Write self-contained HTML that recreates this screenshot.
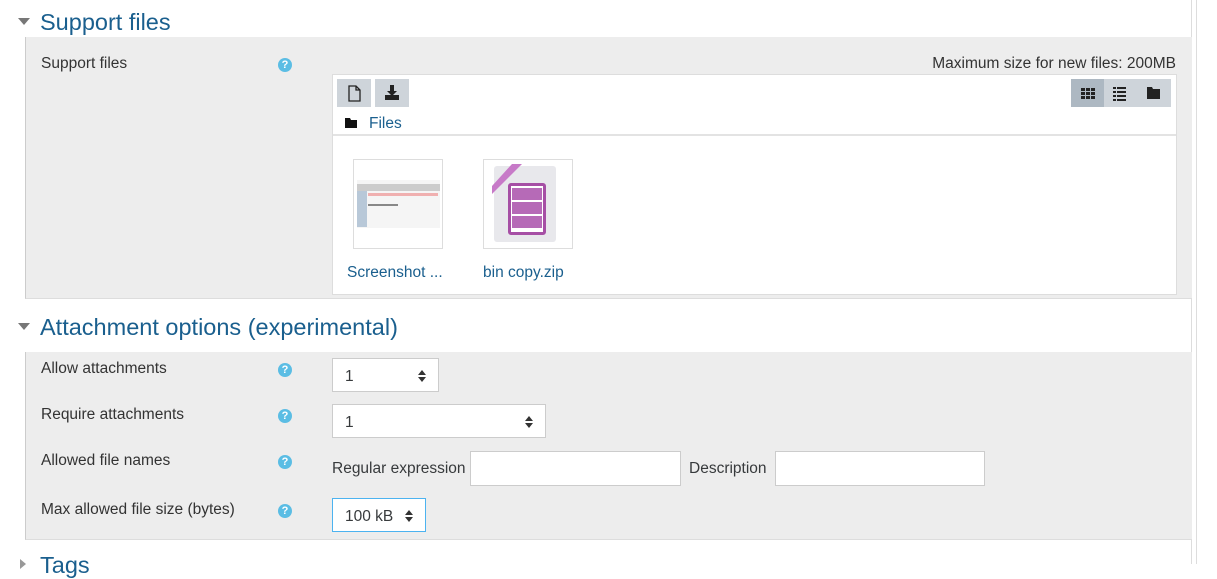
<!DOCTYPE html>
<html><head><style>
body{margin:0;width:1217px;height:564px;overflow:hidden;background:#fff;font-family:"Liberation Sans",sans-serif;font-size:15.5px;color:#373a3c;position:relative}
.a{position:absolute}
h2{position:absolute;margin:0;font-weight:normal;font-size:23.5px;color:#1a5f8e}
.tri{position:absolute;width:0;height:0;border-left:6px solid transparent;border-right:6px solid transparent;border-top:7px solid #777}
.panel{position:absolute;left:25px;width:1166px;background:#ededed;border-left:1px solid #ccc;border-bottom:1px solid #ddd}
.lbl{position:absolute;left:41px;font-size:15.5px;color:#333}
.help{position:absolute;left:278px;width:14px;height:14px;border-radius:50%;background:#5bbde4;color:#fff;font-size:11px;font-weight:bold;text-align:center;line-height:14px}
.sel{position:absolute;left:332px;height:34px;border:1px solid #ccc;background:#fff;box-sizing:border-box;font-size:15.5px;line-height:35px;padding-left:12px}
.sel:after{content:"";position:absolute;right:12px;top:11px;border-left:4px solid transparent;border-right:4px solid transparent;border-bottom:5px solid #333}
.sel:before{content:"";position:absolute;right:12px;top:18px;border-left:4px solid transparent;border-right:4px solid transparent;border-top:5px solid #333}
.inp{position:absolute;height:35px;border:1px solid #ccc;background:#fff;box-sizing:border-box}
.btn{position:absolute;top:79px;height:28px;background:#ced4da}
</style></head><body>
<div class="a" style="left:1191px;top:0;width:1px;height:564px;background:#ddd"></div>
<div class="a" style="left:1196px;top:0;width:1px;height:564px;background:#ddd"></div>

<div class="tri" style="left:18px;top:18px"></div>
<h2 style="left:40px;top:9px">Support files</h2>
<div class="panel" style="top:37px;height:261px"></div>
<div class="lbl" style="top:55px">Support files</div>
<div class="help" style="top:58px">?</div>
<div class="a" style="right:41px;top:55px;font-size:15.5px;color:#333">Maximum size for new files: 200MB</div>
<div class="a" style="left:332px;top:74px;width:843px;height:219px;background:#fff;border:1px solid #ddd"></div>
<div class="btn" style="left:337px;width:34px"><svg width="34" height="28"><path d="M12 7h7l4 4v11H12z M19 7v4h4" fill="none" stroke="#222" stroke-width="1.3"/></svg></div>
<div class="btn" style="left:375px;width:34px"><svg width="34" height="28"><path d="M15 6h4v6h3l-5 5-5-5h3z" fill="#222"/><rect x="10" y="16" width="14" height="5" fill="#222"/></svg></div>
<div class="btn" style="left:1071px;width:33px;background:#adb8c2"><svg width="33" height="28"><g fill="#222"><rect x="10" y="9" width="4" height="3"/><rect x="15" y="9" width="4" height="3"/><rect x="20" y="9" width="4" height="3"/><rect x="10" y="13" width="4" height="3"/><rect x="15" y="13" width="4" height="3"/><rect x="20" y="13" width="4" height="3"/><rect x="10" y="17" width="4" height="3"/><rect x="15" y="17" width="4" height="3"/><rect x="20" y="17" width="4" height="3"/></g></svg></div>
<div class="btn" style="left:1104px;width:67px"><svg width="67" height="28"><g fill="#222"><rect x="9" y="8" width="3" height="2"/><rect x="13" y="8" width="9" height="2"/><rect x="9" y="12" width="3" height="2"/><rect x="13" y="12" width="9" height="2"/><rect x="9" y="16" width="3" height="2"/><rect x="13" y="16" width="9" height="2"/><rect x="9" y="20" width="3" height="2"/><rect x="13" y="20" width="9" height="2"/><path d="M43 8h5l1 2h7v10H43z"/></g></svg></div>
<svg class="a" style="left:344px;top:117px" width="14" height="12"><path d="M1 1h5l1 2h6v8H1z" fill="#111"/></svg>
<div class="a" style="left:369px;top:115px;color:#1a5f8e;font-size:15.5px">Files</div>
<div class="a" style="left:333px;top:134px;width:843px;height:2px;background:#e3e3e3"></div>
<div class="a" style="left:353px;top:159px;width:88px;height:88px;border:1px solid #ddd;background:#fff">
 <div class="a" style="left:3px;top:20px;width:83px;height:48px;background:#f5f5f5"></div>
 <div class="a" style="left:3px;top:24px;width:83px;height:7px;background:#ccc"></div>
 <div class="a" style="left:3px;top:31px;width:10px;height:36px;background:#b8c8d8"></div>
 <div class="a" style="left:14px;top:33px;width:70px;height:3px;background:#f0b0b0"></div>
 <div class="a" style="left:14px;top:44px;width:30px;height:2px;background:#888"></div>
</div>
<div class="a" style="left:483px;top:159px;width:88px;height:88px;border:1px solid #ddd;background:#fff">
 <div class="a" style="left:10px;top:6px;width:62px;height:76px;background:#e8e8ec;border-radius:3px"></div>
 <div class="a" style="left:24px;top:23px;width:38px;height:52px;background:#fff;border:3px solid #a64fa5;box-sizing:border-box;border-radius:3px"></div>
 <div class="a" style="left:28px;top:28px;width:30px;height:12px;background:#b66ab7"></div>
 <div class="a" style="left:28px;top:42px;width:30px;height:12px;background:#b66ab7"></div>
 <div class="a" style="left:28px;top:56px;width:30px;height:12px;background:#b66ab7"></div>
 <svg class="a" style="left:8px;top:4px" width="30" height="30"><path d="M0 22L20 0h10L0 30z" fill="#c77ac8"/></svg>
</div>
<div class="a" style="left:347px;top:264px;color:#1a5f8e;font-size:15.5px">Screenshot ...</div>
<div class="a" style="left:483px;top:264px;color:#1a5f8e;font-size:15.5px">bin copy.zip</div>

<div class="tri" style="left:18px;top:323px"></div>
<h2 style="left:40px;top:314px">Attachment options (experimental)</h2>
<div class="panel" style="top:352px;height:187px"></div>
<div class="lbl" style="top:360px">Allow attachments</div>
<div class="help" style="top:363px">?</div>
<div class="sel" style="top:358px;width:107px">1</div>
<div class="lbl" style="top:406px">Require attachments</div>
<div class="help" style="top:409px">?</div>
<div class="sel" style="top:404px;width:214px">1</div>
<div class="lbl" style="top:452px">Allowed file names</div>
<div class="help" style="top:455px">?</div>
<div class="a" style="left:332px;top:460px">Regular expression</div>
<div class="inp" style="left:470px;top:451px;width:211px"></div>
<div class="a" style="left:689px;top:460px">Description</div>
<div class="inp" style="left:775px;top:451px;width:210px"></div>
<div class="lbl" style="top:501px">Max allowed file size (bytes)</div>
<div class="help" style="top:504px">?</div>
<div class="sel" style="top:498px;width:94px;border-color:#4cb3f0">100 kB</div>
<div class="a" style="left:20px;top:559px;border-top:5px solid transparent;border-bottom:5px solid transparent;border-left:6px solid #999"></div>
<h2 style="left:40px;top:552px">Tags</h2>
</body></html>
